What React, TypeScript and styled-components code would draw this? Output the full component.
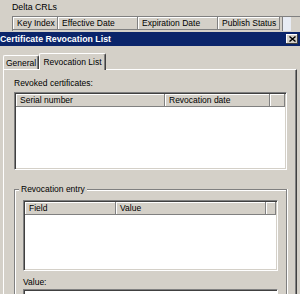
import React from "react";
import styled, { createGlobalStyle } from "styled-components";

const GlobalStyle = createGlobalStyle`
  html, body {
    margin: 0;
    padding: 0;
    background: #d4d0c8;
    width: 300px;
    height: 294px;
    overflow: hidden;
  }
  * { box-sizing: border-box; }
`;

const Screen = styled.div`
  width: 300px;
  height: 294px;
  display: flex;
  flex-direction: column;
  overflow: hidden;
  background: #d4d0c8;
  font-family: "Liberation Sans", Arial, sans-serif;
  font-size: 8.5px;
  color: #000;
`;

const BackWindow = styled.div`
  height: 32px;
  flex: none;
  padding-left: 12px;
  display: flex;
  flex-direction: column;
`;

const BackCaption = styled.div`
  padding-top: 2px;
  line-height: 10px;
  height: 16px;
  font-size: 8.8px;
`;

const BackList = styled.div`
  display: flex;
  height: 15px;
  border-top: 1px solid #808080;
  border-left: 1px solid #808080;
`;

const HeaderCell = styled.div<{ $w?: number }>`
  ${(p) => (p.$w ? `width: ${p.$w}px; flex: none;` : `flex: 1;`)}
  height: 13px;
  line-height: 12px;
  padding-left: 4px;
  white-space: nowrap;
  overflow: hidden;
  background: #d4d0c8;
  border-right: 1px solid #808080;
  border-bottom: 1px solid #808080;
  box-shadow: inset 1px 1px 0 #fff;
`;

const BackEdge = styled.div`
  width: 9px;
  flex: none;
  margin-left: 2px;
  border-left: 1px solid #808080;
  background: #e8ecf4;
`;

const Dialog = styled.div`
  flex: 1;
  display: flex;
  flex-direction: column;
  min-height: 0;
`;

const TitleBar = styled.div`
  height: 14px;
  flex: none;
  background: #0a246a;
  color: #fff;
  font-weight: bold;
  font-size: 8.8px;
  display: flex;
  align-items: center;
  justify-content: space-between;
  padding: 0 2px 0 0;
`;

const TitleText = styled.span`
  line-height: 14px;
  white-space: nowrap;
`;

const CloseButton = styled.div`
  width: 12px;
  height: 10px;
  background: #d4d0c8;
  box-shadow: inset -1px -1px 0 #404040, inset 1px 1px 0 #fff;
  display: flex;
  align-items: center;
  justify-content: center;
`;

const Body = styled.div`
  flex: 1;
  display: flex;
  flex-direction: column;
  padding: 7px 3px 0 3px;
  min-height: 0;
`;

const TabStrip = styled.div`
  height: 16px;
  flex: none;
  display: flex;
  align-items: flex-end;
`;

const Tab = styled.div<{ $active?: boolean; $w: number }>`
  width: ${(p) => p.$w}px;
  height: ${(p) => (p.$active ? 17 : 14)}px;
  margin-bottom: ${(p) => (p.$active ? -1 : 0)}px;
  position: relative;
  z-index: ${(p) => (p.$active ? 1 : 0)};
  background: #d4d0c8;
  border-top: 1px solid #fff;
  border-left: 1px solid #fff;
  border-right: 1px solid #404040;
  border-radius: 2px 2px 0 0;
  box-shadow: inset -1px 0 0 #808080;
  display: flex;
  align-items: ${(p) => (p.$active ? "flex-start" : "center")};
  padding-top: ${(p) => (p.$active ? 3 : 0)}px;
  justify-content: center;
  white-space: nowrap;
  line-height: 10px;
`;

const TabPanel = styled.div`
  flex: 1;
  display: flex;
  flex-direction: column;
  border-top: 1px solid #fff;
  border-left: 1px solid #fff;
  border-right: 1px solid #404040;
  box-shadow: inset -1px 0 0 #808080;
  padding: 8px 9px 0 10px;
  min-height: 0;
`;

const Label = styled.div<{ $top?: number }>`
  line-height: 11px;
  height: 11px;
  margin-top: ${(p) => p.$top ?? 0}px;
  white-space: nowrap;
  flex: none;
`;

const ListBox = styled.div<{ $h: number; $top: number }>`
  height: ${(p) => p.$h}px;
  margin-top: ${(p) => p.$top}px;
  flex: none;
  background: #fff;
  border-top: 1px solid #808080;
  border-left: 1px solid #808080;
  border-right: 1px solid #fff;
  border-bottom: 1px solid #fff;
  box-shadow: inset 1px 1px 0 #404040, inset -1px -1px 0 #d4d0c8;
  padding: 1px 1px 0 1px;
  display: flex;
  flex-direction: column;
`;

const ListHeader = styled.div`
  display: flex;
  height: 13px;
  flex: none;
`;

const GroupBox = styled.div`
  position: relative;
  margin-top: 19px;
  flex: 1;
  display: flex;
  flex-direction: column;
  border: 1px solid #808080;
  border-bottom: none;
  box-shadow: inset 1px 1px 0 #fff, 1px 0 0 #fff;
  padding: 10px 8px 0 8px;
`;

const Legend = styled.div`
  position: absolute;
  top: -6px;
  left: 4px;
  padding: 0 2px;
  background: #d4d0c8;
  line-height: 11px;
  white-space: nowrap;
`;

const ValueBox = styled.div`
  margin-top: 1px;
  flex: 1;
  background: #fff;
  border-top: 1px solid #808080;
  border-left: 1px solid #808080;
  border-right: 1px solid #fff;
  box-shadow: inset 1px 1px 0 #404040;
`;

export default function App() {
  return (
    <>
      <GlobalStyle />
      <Screen>
        <BackWindow>
          <BackCaption>Delta CRLs</BackCaption>
          <BackList>
            <HeaderCell $w={45}>Key Index</HeaderCell>
            <HeaderCell $w={80}>Effective Date</HeaderCell>
            <HeaderCell $w={80}>Expiration Date</HeaderCell>
            <HeaderCell $w={62}>Publish Status</HeaderCell>
            <BackEdge />
          </BackList>
        </BackWindow>
        <Dialog>
          <TitleBar>
            <TitleText>Certificate Revocation List</TitleText>
            <CloseButton>
              <svg width="7" height="6" viewBox="0 0 7 6">
                <path d="M0.5 0.5 L6.5 5.5 M6.5 0.5 L0.5 5.5" stroke="#000" strokeWidth="1.4" />
              </svg>
            </CloseButton>
          </TitleBar>
          <Body>
            <TabStrip>
              <Tab $w={36}>General</Tab>
              <Tab $w={67} $active>
                Revocation List
              </Tab>
            </TabStrip>
            <TabPanel>
              <Label>Revoked certificates:</Label>
              <ListBox $h={78} $top={3}>
                <ListHeader>
                  <HeaderCell $w={149}>Serial number</HeaderCell>
                  <HeaderCell $w={105}>Revocation date</HeaderCell>
                  <HeaderCell />
                </ListHeader>
              </ListBox>
              <GroupBox>
                <Legend>Revocation entry</Legend>
                <ListBox $h={71} $top={0}>
                  <ListHeader>
                    <HeaderCell $w={91}>Field</HeaderCell>
                    <HeaderCell $w={150}>Value</HeaderCell>
                    <HeaderCell />
                  </ListHeader>
                </ListBox>
                <Label $top={6}>Value:</Label>
                <ValueBox />
              </GroupBox>
            </TabPanel>
          </Body>
        </Dialog>
      </Screen>
    </>
  );
}
